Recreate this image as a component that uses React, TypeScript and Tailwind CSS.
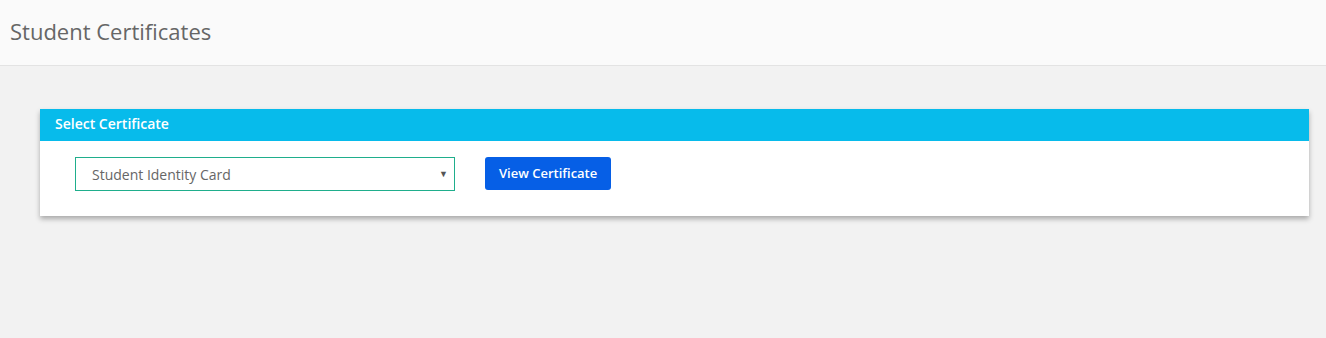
import { useState } from 'react'

const certificates = ['Student Identity Card', 'Bonafide Certificate', 'Transfer Certificate']

export default function App() {
  const [selected, setSelected] = useState(certificates[0])

  return (
    <div className="min-h-[338px] bg-[#f2f2f2] font-['Open_Sans',sans-serif]">
      <div className="flex h-[66px] items-center border-b border-[#e3e3e3] bg-[#fafafa] px-[10px] pb-[4px]">
        <h1 className="text-[22px] leading-none text-[#666]">Student Certificates</h1>
      </div>
      <div className="pl-[40px] pr-[17px] pt-[43px]">
        <div className="bg-white shadow-[0_3px_5px_rgba(0,0,0,0.3)]">
          <div className="flex h-[32px] items-center bg-[#07bbeb] px-[15px] pb-[3px]">
            <span className="text-[14px] font-semibold text-white">Select Certificate</span>
          </div>
          <div className="flex items-start gap-[30px] pb-[25px] pl-[35px] pt-[16px]">
            <div className="relative w-[380px]">
              <select
                value={selected}
                onChange={(e) => setSelected(e.target.value)}
                className="h-[34px] w-full appearance-none border border-[#1fae8c] bg-white pl-[16px] text-[14px] text-[#666] outline-none"
              >
                {certificates.map((c) => (
                  <option key={c} value={c}>
                    {c}
                  </option>
                ))}
              </select>
              <span className="pointer-events-none absolute right-[7px] top-[12px] text-[9px] leading-none text-[#555]">
                ▼
              </span>
            </div>
            <button className="h-[33px] rounded-[3px] bg-[#065fe6] px-[14px] text-[13px] font-semibold text-white">
              View Certificate
            </button>
          </div>
        </div>
      </div>
    </div>
  )
}
